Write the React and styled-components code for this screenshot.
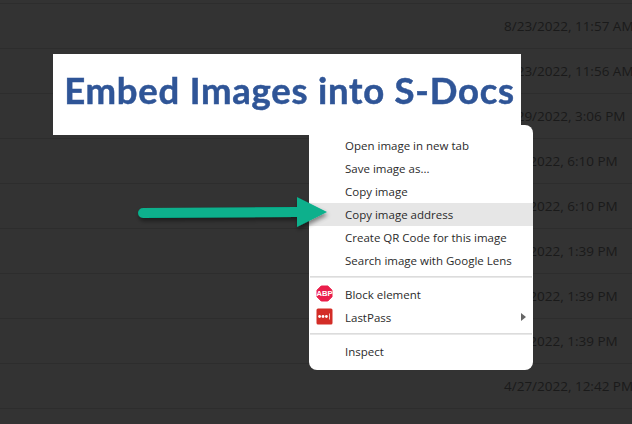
import React from 'react';
import styled, { createGlobalStyle } from 'styled-components';

const GlobalStyle = createGlobalStyle`
    html, body {
        margin: 0;
        padding: 0;
        background-color: #333333;
        overflow: hidden;
    }
`;

const Page = styled.div`
    position: relative;
    width: 632px;
    height: 424px;
    overflow: hidden;
    padding-top: 3px;
    box-sizing: border-box;
    background-color: #333333;
`;

const Row = styled.div`
    display: flex;
    align-items: center;
    height: 45px;
    box-sizing: border-box;
    padding-left: 504px;
    border-top: 1px solid #2d2d2d;
    font-family: "Open Sans", sans-serif;
    font-size: 13.5px;
    color: #1a1a1a;
    white-space: nowrap;
`;

const Banner = styled.div`
    position: absolute;
    left: 53px;
    top: 54px;
    width: 468px;
    height: 81px;
    box-sizing: border-box;
    padding: 0 0 9px 5px;
    display: flex;
    align-items: center;
    justify-content: center;
    background-color: #ffffff;
`;

const BannerTitle = styled.span`
    font-family: Lato, sans-serif;
    font-weight: 700;
    font-size: 36.5px;
    letter-spacing: 0.75px;
    color: #2f5597;
    white-space: nowrap;
    -webkit-text-stroke: 0.5px #2f5597;
    filter: blur(0.4px);
`;

const Menu = styled.div`
    position: absolute;
    left: 309px;
    top: 125px;
    width: 224px;
    height: 245px;
    box-sizing: border-box;
    padding: 9px 0 7px;
    background-color: #ffffff;
    border-radius: 8px;
    font-family: "Open Sans", sans-serif;
    font-size: 11.5px;
    color: #2b2b2b;
`;

const Item = styled.div`
    position: relative;
    display: flex;
    align-items: center;
    height: 23px;
    padding-left: 36px;
    background-color: ${(props) => (props.$active ? '#e6e6e6' : 'transparent')};
`;

const ItemIcon = styled.svg`
    position: absolute;
    left: 7px;
    top: 2px;
    width: 17px;
    height: 17px;
`;

const SubArrow = styled.span`
    position: absolute;
    right: 7px;
    top: 7px;
    width: 0;
    height: 0;
    border-style: solid;
    border-width: 4px 0 4px 5px;
    border-color: transparent transparent transparent #666666;
`;

const Separator = styled.div`
    height: 1px;
    margin: 4px 1px 5px 1px;
    background-color: #dcdcdc;
    border-bottom: 1px solid #e8e8e8;
`;

const Arrow = styled.svg`
    position: absolute;
    left: 130px;
    top: 190px;
    width: 210px;
    height: 50px;
`;

const dates = [
    '8/23/2022, 11:57 AM',
    '8/23/2022, 11:56 AM',
    '6/29/2022, 3:06 PM',
    '6/7/2022, 6:10 PM',
    '6/7/2022, 6:10 PM',
    '5/4/2022, 1:39 PM',
    '5/4/2022, 1:39 PM',
    '5/4/2022, 1:39 PM',
    '4/27/2022, 12:42 PM',
    '',
];

const AbpIcon = () => (
    <ItemIcon viewBox="0 0 17 17">
        <polygon
            points="5.2,1 11.8,1 16,5.2 16,11.8 11.8,16 5.2,16 1,11.8 1,5.2"
            fill="#ea1f4b"
            stroke="#ea1f4b"
            strokeWidth="1"
            strokeLinejoin="round"
        />
        <text x="8.5" y="11.4" textAnchor="middle" fontFamily="Liberation Sans" fontWeight="700" fontSize="7.6" fill="#ffffff">ABP</text>
    </ItemIcon>
);

const LastPassIcon = () => (
    <ItemIcon viewBox="0 0 17 17">
        <rect x="0.5" y="0.5" width="16" height="16" rx="1.5" fill="#d32d27" />
        <circle cx="3.6" cy="8.5" r="1.4" fill="#ffffff" />
        <circle cx="7" cy="8.5" r="1.4" fill="#ffffff" />
        <circle cx="10.4" cy="8.5" r="1.4" fill="#ffffff" />
        <rect x="13" y="5.5" width="1" height="6" fill="#f3c4c2" />
    </ItemIcon>
);

export default function App() {
    return (
        <>
            <GlobalStyle />
            <Page>
                {dates.map((date, i) => (
                    <Row key={i}>{date}</Row>
                ))}
                <Banner>
                    <BannerTitle>Embed Images into S-Docs</BannerTitle>
                </Banner>
                <Menu>
                    <Item>Open image in new tab</Item>
                    <Item>Save image as...</Item>
                    <Item>Copy image</Item>
                    <Item $active>Copy image address</Item>
                    <Item>Create QR Code for this image</Item>
                    <Item>Search image with Google Lens</Item>
                    <Separator />
                    <Item><AbpIcon />Block element</Item>
                    <Item><LastPassIcon />LastPass<SubArrow /></Item>
                    <Separator />
                    <Item>Inspect</Item>
                </Menu>
                <Arrow viewBox="0 0 210 50">
                    <defs>
                        <filter id="arrowShadow" x="-10%" y="-30%" width="120%" height="180%">
                            <feDropShadow dx="1" dy="3" stdDeviation="2" floodColor="#000000" floodOpacity="0.45" />
                        </filter>
                    </defs>
                    <path
                        d="M13 18 L167 17 L167 7 L197 22 L167 37 L167 27 L13 28 A5 5 0 0 1 13 18 Z"
                        fill="#07b08c"
                        filter="url(#arrowShadow)"
                    />
                </Arrow>
            </Page>
        </>
    );
}
